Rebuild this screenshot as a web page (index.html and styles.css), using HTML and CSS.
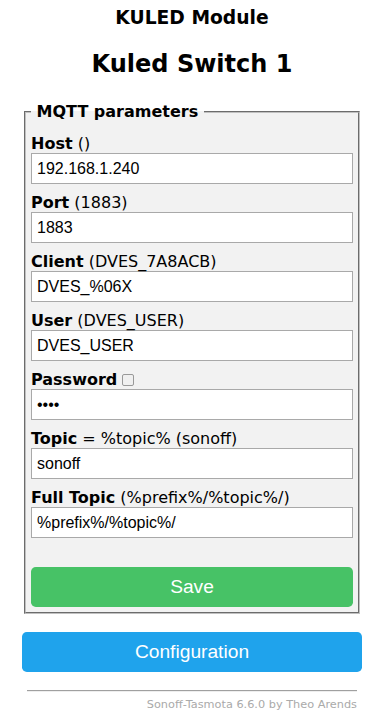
FILE: index.html
```html
<!DOCTYPE html>
<html lang="en">
<head>
    <meta charset="UTF-8">
    <meta name="viewport" content="width=device-width, initial-scale=1.0">
    <title>Kuled Switch 1 - MQTT</title>
    <link rel="stylesheet" href="styles.css">
</head>
<body>
    <div class="main">
        <div class="header">
            <h3>KULED Module</h3>
            <h2>Kuled Switch 1</h2>
        </div>
        <fieldset>
            <legend><b>&nbsp;MQTT parameters&nbsp;</b></legend>
            <form method="get" action="mq">
                <p><b>Host</b> ()<br><input id="mh" placeholder="Host" value="192.168.1.240"></p>
                <p><b>Port</b> (1883)<br><input id="ml" placeholder="1883" value="1883"></p>
                <p><b>Client</b> (DVES_7A8ACB)<br><input id="mc" placeholder="DVES_%06X" value="DVES_%06X"></p>
                <p><b>User</b> (DVES_USER)<br><input id="mu" placeholder="DVES_USER" value="DVES_USER"></p>
                <p><b>Password</b> <input type="checkbox" class="check"><br><input id="mp" type="password" placeholder="Password" value="****"></p>
                <p><b>Topic</b> = %topic% (sonoff)<br><input id="mt" placeholder="Topic" value="sonoff"></p>
                <p><b>Full Topic</b> (%prefix%/%topic%/)<br><input id="mf" placeholder="Full Topic" value="%prefix%/%topic%/"></p>
                <div class="spacer"></div>
                <button name="save" type="submit" class="button bgrn">Save</button>
            </form>
        </fieldset>
        <div class="gap"></div>
        <form action="cn" method="get"><button class="button">Configuration</button></form>
        <div class="footer">
            <hr>
            <a href="#">Sonoff-Tasmota 6.6.0 by Theo Arends</a>
        </div>
    </div>
</body>
</html>
```

FILE: styles.css
```css
body {
    margin: 0;
    text-align: center;
    font-family: "DejaVu Sans", Verdana, sans-serif;
    font-size: 16px;
    color: #000;
    background-color: #fff;
}

.main {
    display: inline-block;
    text-align: left;
    width: 340px;
    padding: 0 0 5px;
}

.header {
    text-align: center;
}

h3 {
    font-size: 18.72px;
    margin: 7px 0 0;
    line-height: 22px;
}

h2 {
    font-size: 24px;
    margin: 21px 0 0;
    line-height: 28px;
}

fieldset {
    background: #f2f2f2;
    margin: 24px 2px 0;
    padding: 3px 5px 5px;
    border: 2px groove #c0c0c0;
}

legend {
    padding: 0;
    font-size: 16px;
}

p {
    margin: 0 0 9px;
    line-height: 19px;
}

p:first-child {
    margin-top: 10px;
}

input {
    display: block;
    width: 100%;
    box-sizing: border-box;
    padding: 5px;
    margin: 0;
    height: 31px;
    font-size: 16px;
    font-family: "Liberation Sans", Arial, sans-serif;
    border: 1px solid #a9a9a9;
    background: #fff;
    color: #000;
}

input.check {
    display: inline-block;
    width: 12px;
    height: 12px;
    margin: 0;
    padding: 0;
    vertical-align: -1px;
    border: 1px solid #999;
    border-radius: 2px;
    -webkit-appearance: none;
    appearance: none;
    background: #f0f0f0;
}

.spacer {
    height: 20px;
}

button {
    display: block;
    border: 0;
    border-radius: 0.3rem;
    background-color: #1fa3ec;
    color: #fff;
    line-height: 2.4rem;
    height: 40px;
    font-size: 1.2rem;
    font-family: "Liberation Sans", Arial, sans-serif;
    width: 100%;
    padding: 0;
    cursor: pointer;
}

.bgrn {
    background-color: #47c266;
}

.gap {
    height: 18px;
}

.footer {
    text-align: right;
    font-size: 11.3px;
    padding: 0 5px;
}

hr {
    margin: 18px 0 6px;
    border: 0;
    border-top: 1px solid #a0a0a0;
    border-bottom: 1px solid #eee;
}

.footer a {
    color: #aaa;
    text-decoration: none;
}
```
